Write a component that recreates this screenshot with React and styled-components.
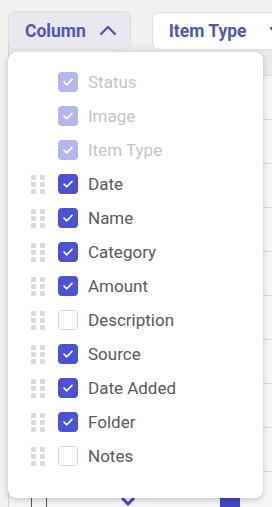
import React from "react";
import styled, { createGlobalStyle } from "styled-components";

const Global = createGlobalStyle`
  html, body { margin: 0; padding: 0; }
  body {
    background: #f2f1ef;
    font-family: Roboto, "Noto Sans", sans-serif;
    overflow: hidden;
  }
`;

const Page = styled.div`
  position: relative;
  width: 272px;
  height: 507px;
  overflow: hidden;
  background: #f2f1ef;
`;

const Toolbar = styled.div`
  display: flex;
  align-items: flex-start;
  gap: 21px;
  padding: 11px 0 0 8px;
  height: 40px;
  box-sizing: border-box;
`;

const FilterButton = styled.button`
  display: flex;
  align-items: center;
  gap: ${(p) => (p.$open ? "13px" : "22px")};
  height: ${(p) => (p.$open ? "39px" : "38px")};
  margin-top: ${(p) => (p.$open ? "0" : "1px")};
  padding: 0 ${(p) => (p.$open ? "13px" : "16px")} 0 16px;
  border-radius: 7px;
  border: 1px solid ${(p) => (p.$open ? "#dcdce4" : "#dcdcee")};
  background: ${(p) => (p.$open ? "#e8e8ee" : "#ffffff")};
  color: #5256b6;
  font-family: Roboto, sans-serif;
  font-weight: 700;
  font-size: 17.5px;
  white-space: nowrap;
  flex-shrink: 0;
  cursor: pointer;
`;

const Table = styled.div`
  margin: 5px 0 0 8px;
  width: 300px;
  background: #f5f5f5;
  border-left: 1px solid #d4d4d4;
`;

const HeaderRow = styled.div`
  height: 30px;
  background: #ebeae8;
  border-bottom: 1px solid #e0e0e0;
`;

const BodyRow = styled.div`
  height: 43px;
  border-bottom: 1px solid #d6d6d6;
  background: #f6f6f6;
`;

const Menu = styled.div`
  position: absolute;
  left: 8px;
  top: 52px;
  width: 255px;
  height: 446px;
  box-sizing: border-box;
  background: #ffffff;
  border-radius: 8px;
  box-shadow: 0 2px 6px rgba(0, 0, 0, 0.18), 0 0 1px rgba(0, 0, 0, 0.2);
  padding: 13px 0 0 23px;
`;

const Row = styled.div`
  display: flex;
  align-items: center;
  height: 34px;
`;

const Handle = styled.div`
  display: grid;
  grid-template-columns: 5px 5px;
  grid-auto-rows: 5px;
  column-gap: 4px;
  row-gap: 2px;
  width: 14px;
  margin-right: 13px;
  visibility: ${(p) => (p.$hidden ? "hidden" : "visible")};
`;

const Dot = styled.span`
  background: #d9d9df;
  border-radius: 1px;
`;

const Box = styled.span`
  width: 20px;
  height: 20px;
  box-sizing: border-box;
  border-radius: 4px;
  display: flex;
  align-items: center;
  justify-content: center;
  margin-right: 10px;
  background: ${(p) =>
    p.$checked ? (p.$locked ? "#b4b6ec" : "#4d51d4") : "#ffffff"};
  border: ${(p) => (p.$checked ? "none" : "1px solid #d4d4d8")};
`;

const Label = styled.span`
  font-family: Roboto, sans-serif;
  font-size: 17px;
  color: ${(p) => (p.$locked ? "#c4c4c4" : "#5b5b5b")};
  white-space: nowrap;
`;

const Below = styled.div`
  position: absolute;
  left: 0;
  top: 498px;
  width: 272px;
  height: 9px;
`;

const VLine = styled.span`
  position: absolute;
  top: 0;
  bottom: 0;
  left: ${(p) => p.$x}px;
  width: 1px;
  background: #555;
`;

const BlueChip = styled.span`
  position: absolute;
  left: 220px;
  top: 0;
  width: 20px;
  height: 9px;
  background: #4346c4;
`;

const Check = () => (
  <svg width="12" height="10" viewBox="0 0 12 10">
    <path
      d="M2 5.2 L4.8 7.8 L10 2.4"
      fill="none"
      stroke="#fff"
      strokeWidth="1.6"
      strokeLinecap="round"
      strokeLinejoin="round"
    />
  </svg>
);

const Chevron = ({ up }) => (
  <svg width="18" height="11" viewBox="0 0 18 11">
    <path
      d={up ? "M2 9 L9 2 L16 9" : "M2 2 L9 9 L16 2"}
      fill="none"
      stroke="#5256b6"
      strokeWidth="2.4"
      strokeLinecap="round"
      strokeLinejoin="round"
    />
  </svg>
);

const items = [
  { name: "Status", checked: true, locked: true },
  { name: "Image", checked: true, locked: true },
  { name: "Item Type", checked: true, locked: true },
  { name: "Date", checked: true },
  { name: "Name", checked: true },
  { name: "Category", checked: true },
  { name: "Amount", checked: true },
  { name: "Description", checked: false },
  { name: "Source", checked: true },
  { name: "Date Added", checked: true },
  { name: "Folder", checked: true },
  { name: "Notes", checked: false },
];

export default function App() {
  return (
    <Page>
      <Global />
      <Toolbar>
        <FilterButton $open>
          Column <Chevron up />
        </FilterButton>
        <FilterButton>
          Item Type <Chevron />
        </FilterButton>
      </Toolbar>
      <Table>
        <HeaderRow />
        {Array.from({ length: 11 }).map((_, i) => (
          <BodyRow key={i} />
        ))}
      </Table>
      <Below>
        <VLine $x={31} />
        <VLine $x={46} />
        <svg
          style={{ position: "absolute", left: 121, top: 0 }}
          width="14"
          height="9"
          viewBox="0 0 14 9"
        >
          <path d="M1 0 L7 6 L13 0" fill="none" stroke="#4346c4" strokeWidth="3" />
        </svg>
        <BlueChip />
      </Below>
      <Menu>
        {items.map((it) => (
          <Row key={it.name}>
            <Handle $hidden={it.locked}>
              {Array.from({ length: 6 }).map((_, i) => (
                <Dot key={i} />
              ))}
            </Handle>
            <Box $checked={it.checked} $locked={it.locked}>
              {it.checked && <Check />}
            </Box>
            <Label $locked={it.locked}>{it.name}</Label>
          </Row>
        ))}
      </Menu>
    </Page>
  );
}
